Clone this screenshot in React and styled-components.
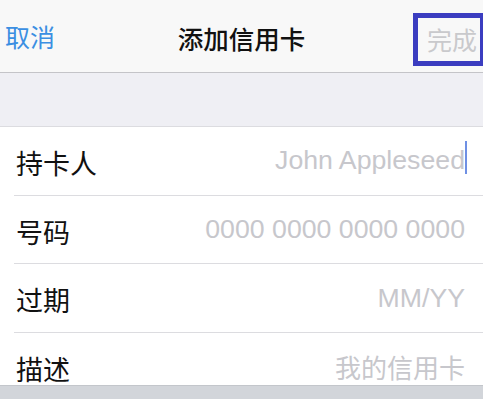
import React from 'react';
import styled, { createGlobalStyle } from 'styled-components';

const GlobalStyle = createGlobalStyle`
	html, body {
		margin: 0;
		padding: 0;
		background: #ffffff;
	}
	body {
		font-family: "Noto Sans CJK SC", "Liberation Sans", sans-serif;
	}
`;

const Screen = styled.div`
	display: flex;
	flex-direction: column;
	width: 483px;
	height: 399px;
	overflow: hidden;
	background: #ffffff;
`;

const NavBar = styled.div`
	display: flex;
	align-items: center;
	justify-content: space-between;
	flex-shrink: 0;
	height: 73px;
	box-sizing: border-box;
	padding-left: 5px;
	background: #f8f8f8;
	border-bottom: 1px solid #c4c4c8;
	position: relative;
`;

const NavButton = styled.div`
	font-size: 25px;
	line-height: 1;
	color: ${(p) => (p.disabled ? '#c9c9cc' : '#3b8fe2')};
`;

const DoneBox = styled.div`
	display: flex;
	align-items: center;
	justify-content: center;
	align-self: flex-start;
	box-sizing: border-box;
	width: 70px;
	height: 53px;
	margin-top: 13px;
	border: 5px solid #3b3dc0;
	border-right-width: 3px;
	background: #f8f8f8;
	padding-left: 6px;
`;

const Title = styled.div`
	position: absolute;
	left: 0;
	right: 0;
	top: 24px;
	text-align: center;
	font-size: 25.5px;
	font-weight: 500;
	line-height: 28px;
	color: #111111;
	pointer-events: none;
`;

const Spacer = styled.div`
	flex-shrink: 0;
	height: 53px;
	background: #efeff4;
	border-bottom: 1px solid #dcdce0;
`;

const List = styled.div`
	flex: 1;
	min-height: 0;
	overflow: hidden;
	display: flex;
	flex-direction: column;
	background: #ffffff;
`;

const Row = styled.div`
	display: flex;
	align-items: center;
	justify-content: space-between;
	height: 68.7px;
	flex-shrink: 0;
	box-sizing: border-box;
	margin-left: 14px;
	padding: 0 18px 0 2px;
	border-bottom: ${(p) => (p.last ? 'none' : '1px solid #dcdce0')};
`;

const Label = styled.div`
	font-size: 27px;
	color: #111111;
	line-height: 1;
	padding-top: 3px;
`;

const Placeholder = styled.div`
	display: flex;
	align-items: center;
	font-family: ${(p) => (p.cjk ? '"Noto Sans CJK SC", sans-serif' : '"Liberation Sans", sans-serif')};
	font-size: ${(p) => (p.cjk ? '26px' : '26.7px')};
	color: #c7c7cc;
	line-height: 1;
	position: relative;
`;

const Caret = styled.span`
	position: absolute;
	right: -2px;
	top: -6px;
	width: 2px;
	height: 33px;
	background: #6f90e4;
`;

const Keyboard = styled.div`
	flex-shrink: 0;
	height: 13px;
	background: #d2d5da;
	border-top: 1px solid #c3c6cb;
`;

const rows = [
	{ label: '持卡人', hint: 'John Appleseed', caret: true },
	{ label: '号码', hint: '0000 0000 0000 0000' },
	{ label: '过期', hint: 'MM/YY' },
	{ label: '描述', hint: '我的信用卡', cjk: true },
];

export default function App() {
	return (
		<>
			<GlobalStyle />
			<Screen>
				<NavBar>
					<NavButton>取消</NavButton>
					<Title>添加信用卡</Title>
					<DoneBox>
						<NavButton disabled>完成</NavButton>
					</DoneBox>
				</NavBar>
				<Spacer />
				<List>
					{rows.map((r, i) => (
						<Row key={r.label} last={i === rows.length - 1}>
							<Label>{r.label}</Label>
							<Placeholder cjk={r.cjk}>
								{r.hint}
								{r.caret && <Caret />}
							</Placeholder>
						</Row>
					))}
				</List>
				<Keyboard />
			</Screen>
		</>
	);
}
